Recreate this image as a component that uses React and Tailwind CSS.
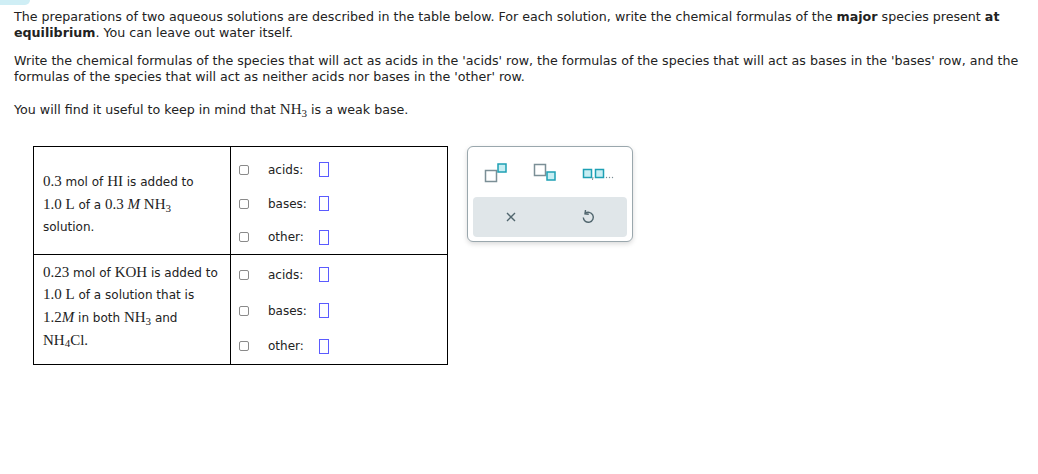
import React from 'react';

const M = ({ children, className = '' }) => (
  <span className={`font-['Liberation_Serif',serif] text-[15px] ${className}`}>{children}</span>
);

const Sub = ({ children }) => (
  <sub className="text-[11px] leading-none">{children}</sub>
);

const Blank = () => (
  <span className="inline-block w-[10px] h-[15px] border border-[#5b5bff] bg-white align-middle" />
);

const Row = ({ label }) => (
  <div className="flex items-center h-[36px]">
    <span className="inline-block w-[10px] h-[10px] border border-[#8a8a8a] rounded-[2px] ml-[8px]" />
    <span className="ml-[19px] w-[51px]">{label}</span>
    <Blank />
  </div>
);

const Choices = ({ className = '' }) => (
  <div className={`flex flex-col justify-center ${className}`}>
    <Row label="acids:" />
    <Row label="bases:" />
    <Row label="other:" />
  </div>
);

export default function App() {
  return (
    <div className="relative w-[1038px] h-[474px] bg-white text-[#222] font-['DejaVu_Sans',Verdana,sans-serif] text-[12.65px] overflow-hidden">
      <div className="absolute left-0 top-0 w-[30px] h-[5px] bg-[#cfeef5] rounded-br-[6px]" />
      <div className="pl-[14px] pr-[10px] pt-[9px]">
        <p className="leading-[16px]">
          The preparations of two aqueous solutions are described in the table below. For each solution, write the chemical formulas of the <b>major</b> species present <b>at equilibrium</b>. You can leave out water itself.
        </p>
        <p className="leading-[16px] mt-[12px]">
          Write the chemical formulas of the species that will act as acids in the 'acids' row, the formulas of the species that will act as bases in the 'bases' row, and the formulas of the species that will act as neither acids nor bases in the 'other' row.
        </p>
        <p className="leading-[16px] mt-[16px]">
          You will find it useful to keep in mind that <M>NH<Sub>3</Sub></M> is a weak base.
        </p>
      </div>

      <div className="flex items-start mt-[28px] ml-[33px] gap-[19px]">
        <div className="border border-black w-[415px] text-[12px]">
          <div className="flex h-[108px] border-b border-black">
            <div className="w-[197px] border-r border-black pl-[9px] pt-[7px] flex flex-col justify-center leading-[22px]">
              <div><M>0.3</M> mol of <M>HI</M> is added to</div>
              <div><M>1.0 L</M> of a <M>0.3 <i>M</i> NH<Sub>3</Sub></M></div>
              <div>solution.</div>
            </div>
            <Choices className="pt-[6px]" />
          </div>
          <div className="flex h-[109px]">
            <div className="w-[197px] border-r border-black pl-[9px] pb-[5px] flex flex-col justify-center leading-[21.7px]">
              <div><M>0.23</M> mol of <M>KOH</M> is added to</div>
              <div><M>1.0 L</M> of a solution that is</div>
              <div><M>1.2<i>M</i></M> in both <M>NH<Sub>3</Sub></M> and</div>
              <div><M>NH<Sub>4</Sub>Cl.</M></div>
            </div>
            <Choices className="pt-[2px]" />
          </div>
        </div>

        <div className="w-[166px] h-[96px] border border-[#9aa7ad] rounded-[6px] bg-white shadow-[0_2px_5px_rgba(0,0,0,0.15)] px-[5px] pt-[5px]">
          <div className="flex justify-around items-center h-[44px]">
            <svg width="26" height="22" viewBox="0 0 26 22">
              <rect x="1.5" y="7.5" width="11" height="11" fill="white" stroke="#7b8f96" strokeWidth="1.5" />
              <rect x="14" y="1" width="8" height="8" fill="#c7eef3" stroke="#1ea0b4" strokeWidth="1.5" />
            </svg>
            <svg width="26" height="22" viewBox="0 0 26 22">
              <rect x="1.5" y="1.5" width="11" height="11" fill="white" stroke="#7b8f96" strokeWidth="1.5" />
              <rect x="14" y="9" width="8" height="8" fill="#c7eef3" stroke="#1ea0b4" strokeWidth="1.5" />
            </svg>
            <svg width="34" height="22" viewBox="0 0 34 22">
              <rect x="1.5" y="6.5" width="8" height="8" fill="#c7eef3" stroke="#1ea0b4" strokeWidth="1.5" />
              <rect x="13.5" y="6.5" width="8" height="8" fill="#c7eef3" stroke="#1ea0b4" strokeWidth="1.5" />
              <path d="M11 14 L10.5 17" stroke="#7b8f96" strokeWidth="1" />
              <circle cx="24.5" cy="14.5" r="0.7" fill="#7b8f96" />
              <circle cx="27.5" cy="14.5" r="0.7" fill="#7b8f96" />
              <circle cx="30.5" cy="14.5" r="0.7" fill="#7b8f96" />
            </svg>
          </div>
          <div className="flex justify-around items-center h-[40px] bg-[#e0e6e9] rounded-[4px] mt-[1px]">
            <svg width="12" height="12" viewBox="0 0 12 12">
              <path d="M2 2 L10 10 M10 2 L2 10" stroke="#51666e" strokeWidth="1.4" />
            </svg>
            <svg width="14" height="16" viewBox="0 0 14 16">
              <path d="M4 4.5 A5 5 0 1 1 2.3 8.5" fill="none" stroke="#51666e" strokeWidth="1.4" />
              <path d="M4.5 1 L4 4.8 L7.8 5.2" fill="none" stroke="#51666e" strokeWidth="1.4" />
            </svg>
          </div>
        </div>
      </div>
    </div>
  );
}
